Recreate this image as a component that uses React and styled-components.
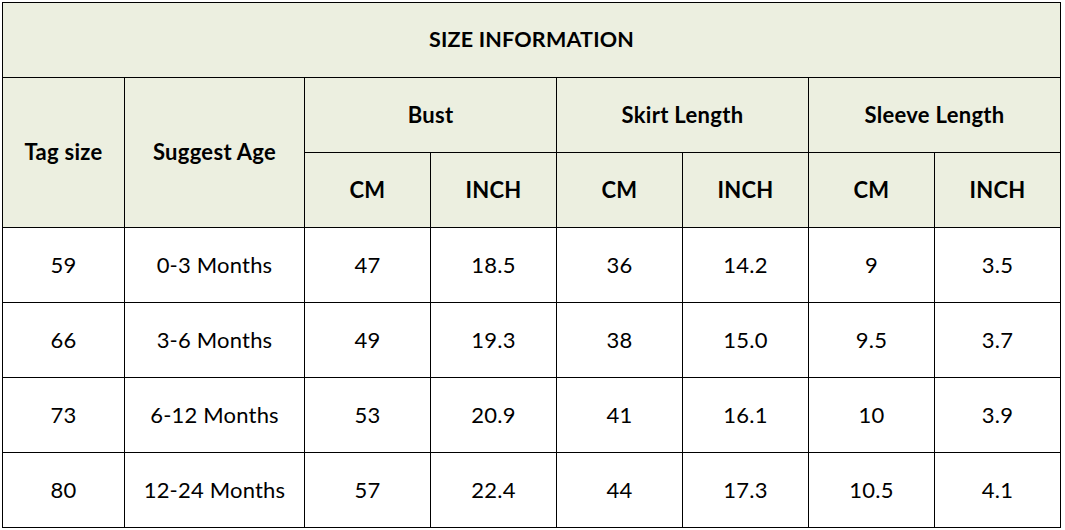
import React from 'react';
import styled, { createGlobalStyle } from 'styled-components';

const GlobalStyle = createGlobalStyle`
  html, body {
    margin: 0;
    padding: 0;
    background: #ffffff;
  }
  body {
    font-family: Lato, "Liberation Sans", sans-serif;
  }
`;

const Page = styled.div`
  padding: 2px;
  width: 1065px;
  height: 530px;
  box-sizing: border-box;
`;

const Grid = styled.div`
  display: grid;
  grid-template-columns: 121px 179px repeat(6, 125px);
  grid-template-rows: repeat(7, 74px);
  gap: 1px;
  padding: 1px;
  background: #000;
  width: 1059px;
  box-sizing: border-box;
`;

const Cell = styled.div`
  display: flex;
  align-items: center;
  justify-content: center;
  background: ${p => (p.$head ? '#ECEFE0' : '#ffffff')};
  color: #000;
  font-size: ${p => (p.$title ? '21.5px' : '22px')};
  font-weight: ${p => (p.$head ? 700 : 400)};
  letter-spacing: ${p => (p.$head && !p.$title ? '0.3px' : '0.2px')};
  grid-column: ${p => p.$col || 'auto'};
  grid-row: ${p => p.$row || 'auto'};
  padding-bottom: 2px;
`;

const rows = [
  ['59', '0-3 Months', '47', '18.5', '36', '14.2', '9', '3.5'],
  ['66', '3-6 Months', '49', '19.3', '38', '15.0', '9.5', '3.7'],
  ['73', '6-12 Months', '53', '20.9', '41', '16.1', '10', '3.9'],
  ['80', '12-24 Months', '57', '22.4', '44', '17.3', '10.5', '4.1'],
];

export default function App() {
  return (
    <Page>
      <GlobalStyle />
      <Grid>
        <Cell $head $title $col="1 / 9" $row="1">SIZE INFORMATION</Cell>
        <Cell $head $col="1" $row="2 / 4">Tag size</Cell>
        <Cell $head $col="2" $row="2 / 4">Suggest Age</Cell>
        <Cell $head $col="3 / 5" $row="2">Bust</Cell>
        <Cell $head $col="5 / 7" $row="2">Skirt Length</Cell>
        <Cell $head $col="7 / 9" $row="2">Sleeve Length</Cell>
        {['CM', 'INCH', 'CM', 'INCH', 'CM', 'INCH'].map((t, i) => (
          <Cell key={i} $head $col={`${i + 3}`} $row="3">{t}</Cell>
        ))}
        {rows.map((r, ri) =>
          r.map((v, ci) => (
            <Cell key={`${ri}-${ci}`} $col={`${ci + 1}`} $row={`${ri + 4}`}>{v}</Cell>
          ))
        )}
      </Grid>
    </Page>
  );
}
